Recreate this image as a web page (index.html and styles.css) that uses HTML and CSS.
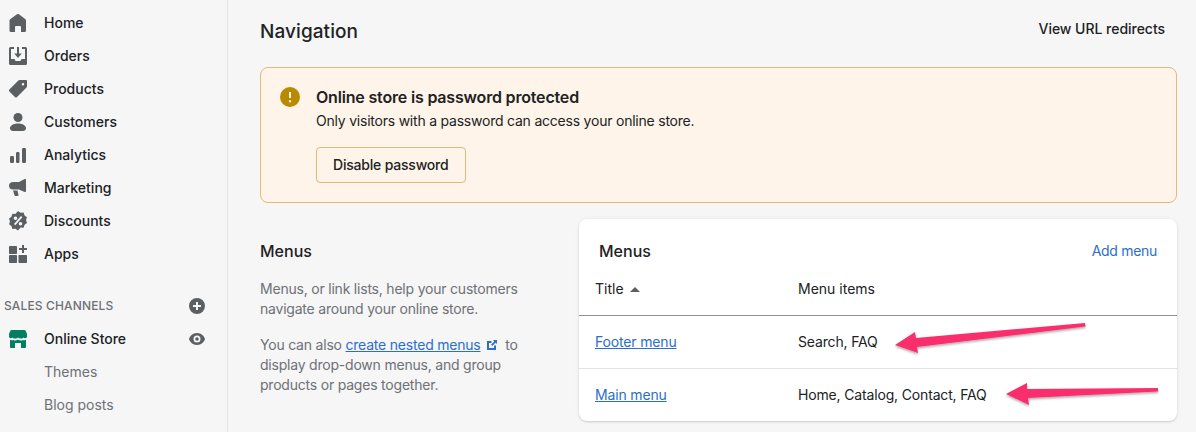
FILE: index.html
```html
<!DOCTYPE html>
<html lang="en">
<head>
<meta charset="utf-8">
<title>Navigation</title>
<link rel="stylesheet" href="styles.css">
</head>
<body>
<div class="app">
  <aside class="sidebar">
    <nav class="nav">
      <a class="nav-item"><svg class="icon" viewBox="0 0 20 20"><path d="M18 7.500v10a1.500 1.500 0 0 1-1.500 1.500H13v-5a1 1 0 0 0-1-1H8a1 1 0 0 0-1 1v5H3A1.500 1.500 0 0 1 1.500 17.500v-10c0-.5.200-.9.600-1.200L9 1.300a1.700 1.700 0 0 1 2 0l6.400 5c.4.300.6.700.6 1.200z"/></svg>Home</a>
      <a class="nav-item"><svg class="icon" viewBox="0 0 20 20"><path fill-rule="evenodd" d="M2.500 1H6v2H3v10h3.500l1 2h5l1-2H17V3h-3V1h3.500A1.500 1.500 0 0 1 19 2.500v15a1.500 1.500 0 0 1-1.500 1.500h-15A1.500 1.500 0 0 1 1 17.500v-15A1.500 1.500 0 0 1 2.500 1zM9 1h2v6.500h2.800L10 12 6.200 7.500H9z"/></svg>Orders</a>
      <a class="nav-item"><svg class="icon" viewBox="0 0 20 20"><path fill-rule="evenodd" d="M18 1h-6.500a1.500 1.500 0 0 0-1.100.5L1.400 10.500a1.500 1.500 0 0 0 0 2.100l5.500 5.500a1.500 1.500 0 0 0 2.100 0l9.500-9.500c.3-.3.500-.7.500-1.100V2a1 1 0 0 0-1-1zm-3 3a1.200 1.200 0 1 1 0 2.400A1.200 1.200 0 0 1 15 4z"/></svg>Products</a>
      <a class="nav-item"><svg class="icon" viewBox="0 0 20 20"><circle cx="10" cy="5.500" r="4.500"/><path d="M10 11.500c-5 0-8 2.300-8 4.700C2 18 3.500 19 5 19h10c1.500 0 3-1 3-2.800 0-2.400-3-4.700-8-4.700z"/></svg>Customers</a>
      <a class="nav-item"><svg class="icon" viewBox="0 0 20 20"><rect x="2" y="11" width="4" height="7" rx="1.200"/><rect x="8" y="7" width="3.500" height="11" rx="1.200"/><rect x="14" y="3" width="4" height="15" rx="1.200"/></svg>Analytics</a>
      <a class="nav-item"><svg class="icon" viewBox="0 0 20 20"><path d="M18 2v11a1 1 0 0 1-1.400.9L11 11.500H5A4 4 0 0 1 1 7.500c0-2 1.800-3.500 4-3.500h6l5.600-2.900A1 1 0 0 1 18 2z"/><path d="M5 12.500h4.500l1 4.700a.800.800 0 0 1-.8.800H7.500a1 1 0 0 1-1-.7z"/></svg>Marketing</a>
      <a class="nav-item"><svg class="icon" viewBox="0 0 20 20"><path fill-rule="evenodd" d="M10 0l2.600 1.700 3-.2 1 2.900 2.400 1.800-1 2.900 1 2.900-2.400 1.800-1 2.900-3-.2L10 19.500l-2.600-1.700-3 .2-1-2.900L1 13.300l1-2.900-1-2.900 2.400-1.800 1-2.900 3 .2zM7.500 5.500a1.800 1.800 0 1 0 0 3.600 1.800 1.800 0 0 0 0-3.600zm5 5.500a1.800 1.800 0 1 0 0 3.600 1.800 1.800 0 0 0 0-3.600zM13 5l-7 8 1.300 1.300 7-8z"/></svg>Discounts</a>
      <a class="nav-item"><svg class="icon" viewBox="0 0 20 20"><rect x="1" y="2" width="8" height="8" rx=".8"/><rect x="1" y="11" width="8" height="8" rx=".8"/><rect x="10.500" y="11" width="8.500" height="8" rx=".8"/><path d="M14 1h2v3h3v2h-3v3h-2V6h-3V4h3z"/></svg>Apps</a>
    </nav>
    <div class="channels">
      <span>SALES CHANNELS</span>
      <svg class="side-action" viewBox="0 0 16 16"><path fill-rule="evenodd" d="M8 0a8 8 0 1 1 0 16A8 8 0 0 1 8 0zm-1 4v3H4v2h3v3h2V9h3V7H9V4z"/></svg>
    </div>
    <a class="nav-item active"><svg class="icon" viewBox="0 0 20 20"><path fill="#008060" d="M4 1h12a2 2 0 0 1 1.800 1.100L19 5v2.500a1.800 1.800 0 0 1-3.300 1A3 3 0 0 1 13 9.500a3 3 0 0 1-3-1 3 3 0 0 1-3 1 3 3 0 0 1-2.700-1A1.800 1.800 0 0 1 1 7.500V5l1.200-2.900A2 2 0 0 1 4 1z"/><path fill="#008060" d="M2 10.800a4 4 0 0 0 3 .2 4.500 4.500 0 0 0 5-.5 4.500 4.500 0 0 0 5 .5 4 4 0 0 0 3-.2V18a1 1 0 0 1-1 1h-4v-5H7v5H3a1 1 0 0 1-1-1z"/></svg>Online Store<svg class="side-action eye" viewBox="0 0 16 12"><path fill-rule="evenodd" d="M8 0c4.500 0 7.300 3.600 8 6-.7 2.400-3.500 6-8 6S.7 8.400 0 6c.7-2.400 3.500-6 8-6zm0 2.500a3.500 3.500 0 1 0 0 7 3.500 3.500 0 0 0 0-7zM8 4.200a1.800 1.800 0 1 1 0 3.600 1.800 1.800 0 0 1 0-3.600z"/></svg></a>
    <a class="nav-item sub">Themes</a>
    <a class="nav-item sub">Blog posts</a>
  </aside>
  <main class="main">
    <header class="page-head">
      <h1>Navigation</h1>
      <a class="head-link">View URL redirects</a>
    </header>
    <section class="banner">
      <svg class="banner-icon" viewBox="0 0 20 20"><path fill="#b98900" fill-rule="evenodd" d="M10 0a10 10 0 1 1 0 20 10 10 0 0 1 0-20zM9 5v6h2V5zm1 8a1.200 1.200 0 1 0 0 2.400 1.200 1.200 0 0 0 0-2.400z"/></svg>
      <div class="banner-body">
        <h2>Online store is password protected</h2>
        <p>Only visitors with a password can access your online store.</p>
        <button class="btn">Disable password</button>
      </div>
    </section>
    <section class="layout">
      <div class="intro">
        <h3>Menus</h3>
        <p>Menus, or link lists, help your customers navigate around your online store.</p>
        <p>You can also <a class="link">create nested menus</a><svg class="ext" viewBox="0 0 12 12"><path d="M1 2h4.500v2H3v5h5V6.500h2V11H1zM7 1h4v4L9.600 3.700 6.300 7 5 5.700l3.300-3.300z"/></svg> to display drop-down menus, and group products or pages together.</p>
      </div>
      <div class="card">
        <div class="card-head">
          <h3>Menus</h3>
          <a class="link plain">Add menu</a>
        </div>
        <div class="row head-row">
          <div class="cell-title">Title<span class="caret"></span></div>
          <div>Menu items</div>
        </div>
        <div class="row first-row">
          <div class="cell-title"><a class="link">Footer menu</a></div>
          <div>Search, FAQ</div>
        </div>
        <div class="row">
          <div class="cell-title"><a class="link">Main menu</a></div>
          <div>Home, Catalog, Contact, FAQ</div>
        </div>
      </div>
    </section>
  </main>
</div>
<svg class="arrows" viewBox="0 0 1196 432">
  <defs><filter id="sh" x="-10%" y="-50%" width="120%" height="200%"><feDropShadow dx="0" dy="1.500" stdDeviation="1" flood-color="#000" flood-opacity=".35"/></filter></defs>
  <path class="arrow" d="M895 345L915 332L916 338L1085 323L1085.500 326.500L917 347L918 353z"/>
  <path class="arrow" d="M1006 394L1027 383L1027 389L1158 388L1158 391.500L1028 398L1029 405z"/>
</svg>
</body>
</html>
```

FILE: styles.css
```css
* { box-sizing: border-box; }
html, body { margin: 0; height: 432px; overflow: hidden; }
body { background: #f6f6f7; color: #202223; font-family: Inter, "Noto Sans", sans-serif; font-size: 14px; line-height: 20px; }
h1, h2, h3, p { margin: 0; }
.app { display: flex; height: 432px; position: relative; }
.sidebar { flex: 0 0 228px; border-right: 1px solid #e1e3e5; padding-top: 6px; }
.nav-item { display: flex; align-items: center; height: 33px; padding-left: 8px; font-weight: 500; color: #202223; }
.icon { flex: none; width: 20px; height: 20px; margin-right: 16px; fill: #5c5f62; }
.channels { display: flex; align-items: center; justify-content: space-between; height: 20px; margin-top: 26px; margin-bottom: 6px; padding: 0 22px 0 4px; color: #6d7175; font-size: 12px; font-weight: 500; letter-spacing: .15px; }
.side-action { width: 16px; height: 16px; fill: #5c5f62; flex: none; }
.eye { height: 12px; margin-left: auto; margin-right: 22px; }
.sub { padding-left: 44px; color: #6d7175; font-weight: 400; }
.main { flex: 1; min-width: 0; padding-left: 32px; padding-right: 19px; }
.page-head { display: flex; justify-content: space-between; height: 63px; padding-right: 12px; padding-top: 18px; }
h1 { font-size: 19px; font-weight: 500; line-height: 26px; padding-top: 1px; letter-spacing: .08px; }
.head-link { font-weight: 500; line-height: 22px; letter-spacing: -.03px; }
.banner { display: flex; height: 136px; margin-top: 4px; padding: 19px 19px; background: #fff4e9; border: 1px solid #e6b873; border-radius: 8px; }
.banner-icon { flex: none; width: 20px; height: 20px; margin-right: 16px; }
.banner-body h2 { font-size: 16px; font-weight: 600; line-height: 20px; letter-spacing: -.18px; }
.banner-body p { margin-top: 4px; letter-spacing: -.22px; }
.btn { display: block; height: 36px; margin-top: 16px; padding: 0 16px; background: transparent; border: 1px solid #e0b77d; border-radius: 4px; color: #202223; font: 500 14px/20px Inter, "Noto Sans", sans-serif; letter-spacing: -.2px; }
.layout { display: flex; margin-top: 16px; }
.intro { flex: 0 0 319px; padding-top: 22px; padding-right: 48px; color: #6d7175; letter-spacing: -.21px; }
.intro h3 { font-size: 16px; font-weight: 500; color: #202223; line-height: 20px; margin-bottom: 18px; letter-spacing: 0; }
.intro p + p { margin-top: 16px; }
.link { color: #2c6ecb; text-decoration: underline; }
.plain { text-decoration: none; letter-spacing: -.3px; }
.ext { width: 12px; height: 12px; margin: 0 4px 0 5px; vertical-align: -1px; fill: #2c6ecb; }
.card { flex: 1; height: 202px; background: #fff; border-radius: 8px; box-shadow: 0 0 5px rgba(23,24,24,.05), 0 1px 2px rgba(0,0,0,.15); letter-spacing: -.16px; }
.card-head { display: flex; align-items: center; justify-content: space-between; height: 65px; padding: 0 20px 2px; }
.card-head h3 { font-size: 16px; font-weight: 500; letter-spacing: 0; }
.row { display: flex; align-items: center; height: 53px; padding-left: 16px; border-top: 1px solid #e1e3e5; }
.head-row { height: 32px; border-top: 0; padding-bottom: 21px; border-bottom: 1px solid #8c9196; letter-spacing: 0; }
.first-row { height: 52px; border-top: 0; }
.cell-title { flex: 0 0 203px; display: flex; align-items: center; }
.caret { width: 0; height: 0; margin-left: 6px; border: 5px solid transparent; border-top: 0; border-bottom: 5px solid #5c5f62; }
.arrows { position: absolute; left: 0; top: 0; width: 1196px; height: 432px; pointer-events: none; }
.arrow { fill: #fb2f6d; filter: url(#sh); }
```
